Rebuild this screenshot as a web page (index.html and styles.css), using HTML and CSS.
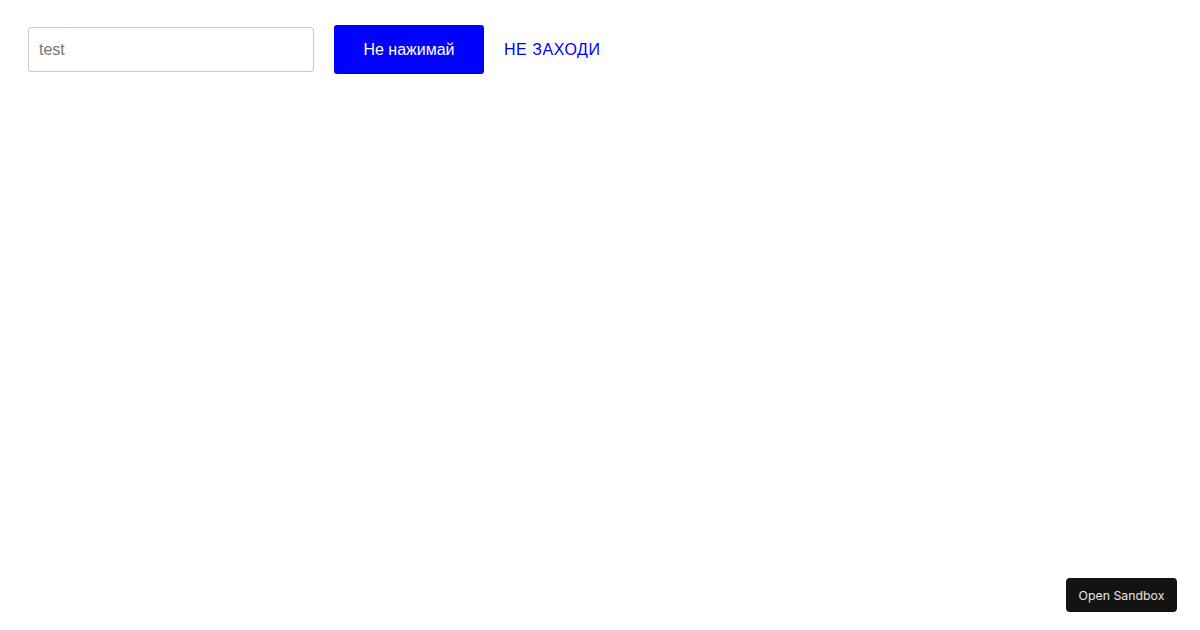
FILE: index.html
```html
<!DOCTYPE html>
<html>
<head>
<meta charset="utf-8">
<link rel="stylesheet" href="styles.css">
</head>
<body>
<div class="row">
  <input class="field" type="text" placeholder="test">
  <button class="btn">Не нажимай</button>
  <a class="link" href="#">НЕ ЗАХОДИ</a>
</div>
<div class="sandbox">Open Sandbox</div>
</body>
</html>
```
FILE: styles.css
```css
html, body {
  margin: 0;
  padding: 0;
  background: #fff;
  font-family: "Liberation Sans", Arial, sans-serif;
}
body {
  width: 1200px;
  height: 630px;
  position: relative;
  overflow: hidden;
}
.row {
  display: flex;
  align-items: center;
  gap: 20px;
  padding: 25px 28px;
}
.field {
  box-sizing: border-box;
  width: 286px;
  height: 45px;
  border: 1px solid #c8c8c8;
  border-radius: 3px;
  padding: 0 10px;
  font-family: "Liberation Sans", Arial, sans-serif;
  font-size: 16px;
  color: #333;
  outline: none;
}
.field::placeholder {
  color: #767676;
}
.btn {
  box-sizing: border-box;
  width: 150px;
  height: 49px;
  border: none;
  border-radius: 3px;
  background: #0000ff;
  color: #fff;
  font-family: "Liberation Sans", Arial, sans-serif;
  font-size: 16px;
  padding: 0;
}
.link {
  color: #0000ff;
  text-decoration: none;
  font-size: 16px;
  letter-spacing: 0.55px;
}
.sandbox {
  position: absolute;
  right: 23px;
  bottom: 18px;
  box-sizing: border-box;
  width: 111px;
  height: 34px;
  background: #131313;
  color: #e8e8e8;
  border-radius: 4px;
  font-family: Inter, "Liberation Sans", sans-serif;
  font-size: 12.3px;
  display: flex;
  align-items: center;
  justify-content: center;
}
```
